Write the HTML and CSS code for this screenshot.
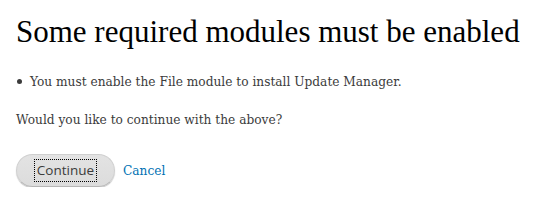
FILE: index.html
```html
<!DOCTYPE html>
<html lang="en">
<head>
    <meta charset="UTF-8">
    <title>Some required modules must be enabled</title>
    <link rel="stylesheet" href="styles.css">
</head>
<body>
    <div class="page">
        <h1 class="title">Some required modules must be enabled</h1>
        <form class="confirm">
            <ul class="messages">
                <li>You must enable the File module to install Update Manager.</li>
            </ul>
            <p class="question">Would you like to continue with the above?</p>
            <div class="actions">
                <button type="button" class="button"><span class="focus">Continue</span></button>
                <a href="#" class="cancel">Cancel</a>
            </div>
        </form>
    </div>
</body>
</html>
```

FILE: styles.css
```css
body {
    margin: 0;
    background: #fff;
    color: #3b3b3b;
    font-family: Georgia, "DejaVu Serif", "Liberation Serif", serif;
}

.page {
    padding: 14px 16px 0;
}

.title {
    margin: 0 0 22px;
    font-family: Georgia, "Liberation Serif", serif;
    font-weight: normal;
    font-size: 31px;
    line-height: 36px;
    color: #000;
}

.messages {
    margin: 0 0 18px;
    padding: 0;
    list-style: none;
    font-size: 12.2px;
    line-height: 20px;
}

.messages li::before {
    content: "";
    display: inline-block;
    width: 5px;
    height: 5px;
    margin: 0 8px 2px 1px;
    border-radius: 50%;
    background: #3b3b3b;
}

.question {
    margin: 0 0 24px;
    font-size: 12.2px;
    line-height: 20px;
}

.actions {
    display: flex;
    align-items: center;
    gap: 8px;
}

.button {
    display: flex;
    align-items: center;
    justify-content: center;
    width: 99px;
    height: 33px;
    padding: 0;
    border: 1px solid #cfcfcf;
    border-bottom-color: #b5b5b5;
    border-radius: 17px;
    background: linear-gradient(to bottom, #e3e3e3, #dcdcdc);
    box-shadow: 0 1px 1px #c4c4c4;
    color: #3b3b3b;
    font-family: "Segoe UI", "Open Sans", sans-serif;
    font-size: 13.5px;
}

.button .focus {
    display: block;
    padding: 0 2px;
    line-height: 21px;
    outline: 1px dotted #000;
}

.cancel {
    color: #0071b3;
    text-decoration: none;
    font-size: 12.2px;
}
```
